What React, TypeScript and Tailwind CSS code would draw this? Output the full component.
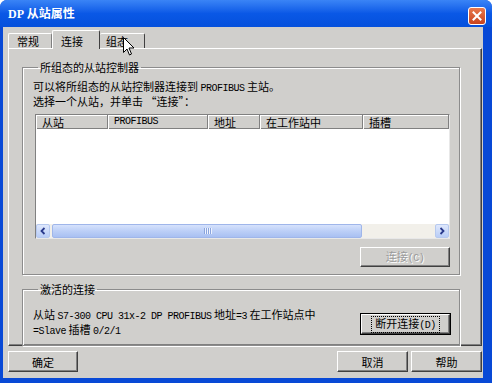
import { ReactNode } from 'react'

const latin = "font-['Liberation_Mono',monospace] text-[10px] tracking-[-0.5px] leading-[12px]"

function L({ children }: { children: ReactNode }) {
  return <span className={latin}>{children}</span>
}

function Btn({
  children,
  className = '',
  disabled = false,
  focused = false,
}: {
  children: ReactNode
  className?: string
  disabled?: boolean
  focused?: boolean
}) {
  return (
    <div
      className={`flex items-center justify-center bg-[#d0cfcc] border border-t-white border-l-white border-r-[#404040] border-b-[#404040] shadow-[inset_-1px_-1px_0_#808080] ${
        focused ? 'outline outline-1 outline-black' : ''
      } ${className}`}
    >
      <span
        className={`px-[3px] leading-[12px] ${
          disabled ? 'text-[#9a9a9a] [text-shadow:1px_1px_0_#fff]' : 'text-black'
        } ${focused ? 'outline outline-1 outline-dotted outline-black' : ''}`}
      >
        {children}
      </span>
    </div>
  )
}

const columns = [
  { label: '从站', w: 'w-[72px]' },
  { label: 'PROFIBUS', w: 'w-[100px]', latin: true },
  { label: '地址', w: 'w-[52px]' },
  { label: '在工作站中', w: 'w-[103px]' },
  { label: '插槽', w: 'flex-1' },
]

export default function App() {
  return (
    <div className="relative w-[492px] h-[383px] bg-[#0849d6] flex flex-col rounded-t-[7px] overflow-hidden font-['Noto_Sans_CJK_SC',sans-serif] text-[11px] text-black">
      {/* title bar */}
      <div className="h-[27px] shrink-0 flex items-center justify-between pl-[8px] pr-[6px] bg-gradient-to-b from-[#3a84f6] via-[#0a58e6] to-[#0550dc]">
        <span className="text-white font-bold text-[12px] leading-none">
          <span className="font-['Liberation_Serif',serif] text-[12px]">DP</span> 从站属性
        </span>
        <div className="mt-[4px] w-[18px] h-[18px] rounded-[3px] border border-white bg-gradient-to-b from-[#e8784c] to-[#c8421c] flex items-center justify-center">
          <svg width="10" height="10" viewBox="0 0 10 10">
            <path d="M1.5 1.5 L8.5 8.5 M8.5 1.5 L1.5 8.5" stroke="white" strokeWidth="2" strokeLinecap="square" />
          </svg>
        </div>
      </div>

      {/* body */}
      <div className="flex-1 ml-[3px] mr-[9px] mb-[5px] bg-[#d0cfcc] flex flex-col">
        {/* tabs */}
        <div className="flex items-end pl-[5px] pt-[3px] h-[21px] shrink-0">
          <div className="w-[44px] h-[15px] flex items-center pl-[8px] border-t border-l border-white border-r border-r-[#808080] rounded-t-[2px]">
            常规
          </div>
          <div className="relative z-10 -mb-px w-[48px] h-[19px] flex items-start pt-[2px] pl-[8px] bg-[#d0cfcc] border-t border-l border-white border-r border-r-[#404040] rounded-t-[2px]">
            连接
          </div>
          <div className="w-[45px] h-[15px] flex items-center pl-[6px] border-t border-white border-r border-r-[#404040] rounded-t-[2px]">
            组态
          </div>
        </div>

        {/* tab panel */}
        <div className="ml-[5px] mr-[1px] h-[298px] shrink-0 border border-t-white border-l-white border-r-[#404040] border-b-[#404040] shadow-[inset_-1px_-1px_0_#808080] pl-[13px] pr-[21px] flex flex-col">
          <fieldset className="mt-[12px] border border-[#8c8c8c] shadow-[1px_1px_0_#fff,inset_1px_1px_0_#fff] pl-[10px] pr-[9px] pt-[6px] pb-[7px]">
            <legend className="ml-[5px] px-[2px] leading-[13px]">所组态的从站控制器</legend>
            <div className="leading-[12px]">
              可以将所组态的从站控制器连接到 <L>PROFIBUS</L> 主站。
            </div>
            <div className="leading-[12px]">选择一个从站，并单击 “连接”：</div>

            {/* list view */}
            <div className="mt-[7px] ml-[2px] h-[125px] bg-white border border-t-[#808080] border-l-[#808080] border-r-[#e8e8e8] border-b-[#e8e8e8] flex flex-col">
              <div className="flex h-[14px] shrink-0 bg-[#d0cfcc]">
                {columns.map((c) => (
                  <div
                    key={c.label}
                    className={`${c.w} h-full flex items-center pl-[6px] border-r border-r-[#808080] shadow-[inset_1px_1px_0_#fff,inset_0_-1px_0_#808080] leading-none`}
                  >
                    {c.latin ? <L>{c.label}</L> : c.label}
                  </div>
                ))}
              </div>
              <div className="flex-1" />
              {/* horizontal scrollbar */}
              <div className="h-[14px] shrink-0 flex items-stretch bg-[#f2f0ea]">
                <div className="w-[14px] bg-gradient-to-b from-[#dfe8fc] to-[#b9cdf6] border border-[#b6c9ef] rounded-[2px] flex items-center justify-center">
                  <svg width="6" height="8" viewBox="0 0 6 8">
                    <path d="M4.5 1 L1.5 4 L4.5 7" stroke="#2a3a8c" strokeWidth="1.8" fill="none" />
                  </svg>
                </div>
                <div className="ml-[2px] w-[310px] bg-gradient-to-b from-[#d6e2fc] via-[#bccff7] to-[#a9c0f2] border border-[#9fb6ea] rounded-[2px] flex items-center justify-center">
                  <div className="flex gap-[1px]">
                    {[0, 1, 2, 3].map((i) => (
                      <div key={i} className="w-[1px] h-[6px] bg-[#8aa4dc] shadow-[1px_0_0_#eef3fe]" />
                    ))}
                  </div>
                </div>
                <div className="flex-1" />
                <div className="w-[14px] bg-gradient-to-b from-[#dfe8fc] to-[#b9cdf6] border border-[#b6c9ef] rounded-[2px] flex items-center justify-center">
                  <svg width="6" height="8" viewBox="0 0 6 8">
                    <path d="M1.5 1 L4.5 4 L1.5 7" stroke="#2a3a8c" strokeWidth="1.8" fill="none" />
                  </svg>
                </div>
              </div>
            </div>

            <div className="flex justify-end mt-[8px]">
              <Btn disabled className="w-[90px] h-[20px]">
                连接<L>(C)</L>
              </Btn>
            </div>
          </fieldset>

          <fieldset className="mt-[8px] border border-[#8c8c8c] shadow-[1px_1px_0_#fff,inset_1px_1px_0_#fff] pl-[10px] pr-[9px] pt-[12px] pb-[7px]">
            <legend className="ml-[5px] px-[2px] leading-[13px]">激活的连接</legend>
            <div className="flex items-start justify-between">
              <div className="leading-[12px]">
                <div>
                  从站 <L>S7-300 CPU 31x-2 DP PROFIBUS</L> 地址<L>=3</L> 在工作站点中
                </div>
                <div>
                  <L>=Slave</L> 插槽 <L>0/2/1</L>
                </div>
              </div>
              <Btn focused className="mt-[6px] w-[89px] h-[20px]">
                断开连接<L>(D)</L>
              </Btn>
            </div>
          </fieldset>
        </div>

        {/* bottom buttons */}
        <div className="mt-[5px] ml-[5px] mr-[1px] flex">
          <Btn className="w-[70px] h-[21px]">确定</Btn>
          <div className="flex-1" />
          <Btn className="w-[71px] h-[21px]">取消</Btn>
          <Btn className="ml-[3px] w-[71px] h-[21px]">帮助</Btn>
        </div>
      </div>

      {/* mouse cursor */}
      <svg className="absolute left-[123px] top-[37px]" width="12" height="19" viewBox="0 0 12 19">
        <path d="M0.5 0.5 L0.5 15.5 L4 12 L6.5 18 L8.5 17 L6 11 L11 11 Z" fill="white" stroke="black" strokeWidth="1" />
      </svg>
    </div>
  )
}
